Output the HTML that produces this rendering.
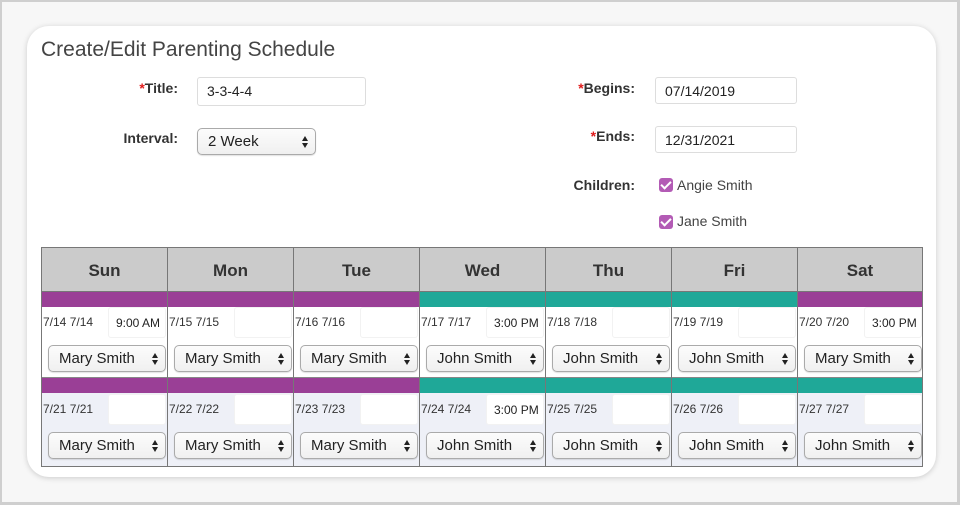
<!DOCTYPE html>
<html><head><meta charset="utf-8"><style>
*{box-sizing:border-box;margin:0;padding:0}
body{width:960px;height:505px;background:#f7f7f7;font-family:"Liberation Sans","DejaVu Sans",sans-serif;color:#333;position:relative;overflow:hidden}
.frame{position:absolute;left:0;top:0;width:960px;height:505px;border:2px solid #cfcfcf;border-right-width:3px;border-bottom-width:3px}
.card{position:absolute;left:27px;top:26px;width:909px;height:451px;background:#fff;border-radius:22px;box-shadow:0 1px 6px rgba(0,0,0,.18)}
h1{position:absolute;left:41px;top:38px;font-size:21px;font-weight:normal;color:#444}
.lbl{position:absolute;font-size:14px;font-weight:bold;color:#333;text-align:right}
.lbl b{color:#e01b1b}
.inp{position:absolute;border:1px solid #ddd;border-radius:3px;background:#fff;font-size:14px;padding-left:9px;line-height:26px;color:#222}
.sel{position:absolute;border:1px solid #aaa;border-radius:5px;background:linear-gradient(#fcfcfc,#f0f0f0);font-size:15px;color:#222;padding-left:10px;box-shadow:0 1px 1px rgba(0,0,0,.12)}
.arr{position:absolute;right:6px;top:50%;margin-top:-7px;width:7px;height:14px}
.arr:before{content:"";position:absolute;left:0;top:1px;border-left:3.5px solid transparent;border-right:3.5px solid transparent;border-bottom:5px solid #222}
.arr:after{content:"";position:absolute;left:0;bottom:1px;border-left:3.5px solid transparent;border-right:3.5px solid transparent;border-top:5px solid #222}
.cb{position:absolute;width:14px;height:14px;background:#b35bb5;border-radius:3px}
.cb:after{content:"";position:absolute;left:4px;top:1px;width:4px;height:8px;border:solid #fff;border-width:0 2px 2px 0;transform:rotate(45deg)}
.ck{position:absolute;font-size:14px;color:#444}
.tbl{position:absolute;left:41px;top:247px;width:882px;height:220px;border:1px solid #777}
.hd{position:absolute;top:0;height:44px;background:#cbcbcb;font-size:17px;font-weight:bold;text-align:center;line-height:46px;color:#333;border-right:1px solid #777;border-bottom:1px solid #777}
.bar{position:absolute;height:15px}
.p{background:#9a3f96}.t{background:#1fa898}
.r2{position:absolute;left:0;top:145px;width:880px;height:73px;background:#eef0f7}
.vl{position:absolute;top:0;width:1px;height:218px;background:#777}
.hl{position:absolute;left:0;width:880px;height:1px;background:#888}
.d{position:absolute;font-size:12px;color:#333}
.ti{position:absolute;width:58px;height:31px;background:#fff;border:1px solid #f2f2f2;border-radius:3px;font-size:12px;line-height:30px;padding-left:7px;color:#222;white-space:nowrap;overflow:hidden}
.cs{width:118px;height:27px;line-height:25px}
</style></head><body>
<div class="frame"></div>
<div class="card"></div>
<h1>Create/Edit Parenting Schedule</h1>
<div class="lbl" style="left:100px;top:80px;width:78px"><b>*</b>Title:</div>
<div class="inp" style="left:197px;top:77px;width:169px;height:29px">3-3-4-4</div>
<div class="lbl" style="left:100px;top:130px;width:78px">Interval:</div>
<div class="sel" style="left:197px;top:128px;width:119px;height:27px;line-height:25px">2 Week<span class="arr"></span></div>
<div class="lbl" style="left:540px;top:80px;width:95px"><b>*</b>Begins:</div>
<div class="inp" style="left:655px;top:77px;width:142px;height:27px">07/14/2019</div>
<div class="lbl" style="left:540px;top:128px;width:95px"><b>*</b>Ends:</div>
<div class="inp" style="left:655px;top:126px;width:142px;height:27px">12/31/2021</div>
<div class="lbl" style="left:540px;top:177px;width:95px">Children:</div>
<div class="cb" style="left:659px;top:178px"></div><div class="ck" style="left:677px;top:177px">Angie Smith</div>
<div class="cb" style="left:659px;top:215px"></div><div class="ck" style="left:677px;top:213px">Jane Smith</div>

<div class="tbl">
<div class="r2"></div>
<div class="hd" style="left:0;width:126px">Sun</div>
<div class="hd" style="left:126px;width:126px">Mon</div>
<div class="hd" style="left:252px;width:126px">Tue</div>
<div class="hd" style="left:378px;width:126px">Wed</div>
<div class="hd" style="left:504px;width:126px">Thu</div>
<div class="hd" style="left:630px;width:126px">Fri</div>
<div class="hd" style="left:756px;width:124px;border-right:0">Sat</div>
<div class="bar p" style="left:0;top:44px;width:378px"></div>
<div class="bar t" style="left:378px;top:44px;width:378px"></div>
<div class="bar p" style="left:756px;top:44px;width:124px"></div>
<div class="bar p" style="left:0;top:130px;width:378px"></div>
<div class="bar t" style="left:378px;top:130px;width:502px"></div>
<div class="hl" style="top:129px"></div>

<div class="d" style="left:1px;top:67px">7/14 7/14</div><div class="ti" style="left:66px;top:59px">9:00 AM</div><div class="sel cs" style="left:6px;top:97px">Mary Smith<span class="arr"></span></div>
<div class="d" style="left:127px;top:67px">7/15 7/15</div><div class="ti" style="left:192px;top:59px"></div><div class="sel cs" style="left:132px;top:97px">Mary Smith<span class="arr"></span></div>
<div class="d" style="left:253px;top:67px">7/16 7/16</div><div class="ti" style="left:318px;top:59px"></div><div class="sel cs" style="left:258px;top:97px">Mary Smith<span class="arr"></span></div>
<div class="d" style="left:379px;top:67px">7/17 7/17</div><div class="ti" style="left:444px;top:59px">3:00 PM</div><div class="sel cs" style="left:384px;top:97px">John Smith<span class="arr"></span></div>
<div class="d" style="left:505px;top:67px">7/18 7/18</div><div class="ti" style="left:570px;top:59px"></div><div class="sel cs" style="left:510px;top:97px">John Smith<span class="arr"></span></div>
<div class="d" style="left:631px;top:67px">7/19 7/19</div><div class="ti" style="left:696px;top:59px"></div><div class="sel cs" style="left:636px;top:97px">John Smith<span class="arr"></span></div>
<div class="d" style="left:757px;top:67px">7/20 7/20</div><div class="ti" style="left:822px;top:59px">3:00 PM</div><div class="sel cs" style="left:762px;top:97px">Mary Smith<span class="arr"></span></div>

<div class="d" style="left:1px;top:154px">7/21 7/21</div><div class="ti" style="left:66px;top:146px"></div><div class="sel cs" style="left:6px;top:184px">Mary Smith<span class="arr"></span></div>
<div class="d" style="left:127px;top:154px">7/22 7/22</div><div class="ti" style="left:192px;top:146px"></div><div class="sel cs" style="left:132px;top:184px">Mary Smith<span class="arr"></span></div>
<div class="d" style="left:253px;top:154px">7/23 7/23</div><div class="ti" style="left:318px;top:146px"></div><div class="sel cs" style="left:258px;top:184px">Mary Smith<span class="arr"></span></div>
<div class="d" style="left:379px;top:154px">7/24 7/24</div><div class="ti" style="left:444px;top:146px">3:00 PM</div><div class="sel cs" style="left:384px;top:184px">John Smith<span class="arr"></span></div>
<div class="d" style="left:505px;top:154px">7/25 7/25</div><div class="ti" style="left:570px;top:146px"></div><div class="sel cs" style="left:510px;top:184px">John Smith<span class="arr"></span></div>
<div class="d" style="left:631px;top:154px">7/26 7/26</div><div class="ti" style="left:696px;top:146px"></div><div class="sel cs" style="left:636px;top:184px">John Smith<span class="arr"></span></div>
<div class="d" style="left:757px;top:154px">7/27 7/27</div><div class="ti" style="left:822px;top:146px"></div><div class="sel cs" style="left:762px;top:184px">John Smith<span class="arr"></span></div>

<div class="vl" style="left:125px"></div><div class="vl" style="left:251px"></div><div class="vl" style="left:377px"></div>
<div class="vl" style="left:503px"></div><div class="vl" style="left:629px"></div><div class="vl" style="left:755px"></div>
</div>
</body></html>
